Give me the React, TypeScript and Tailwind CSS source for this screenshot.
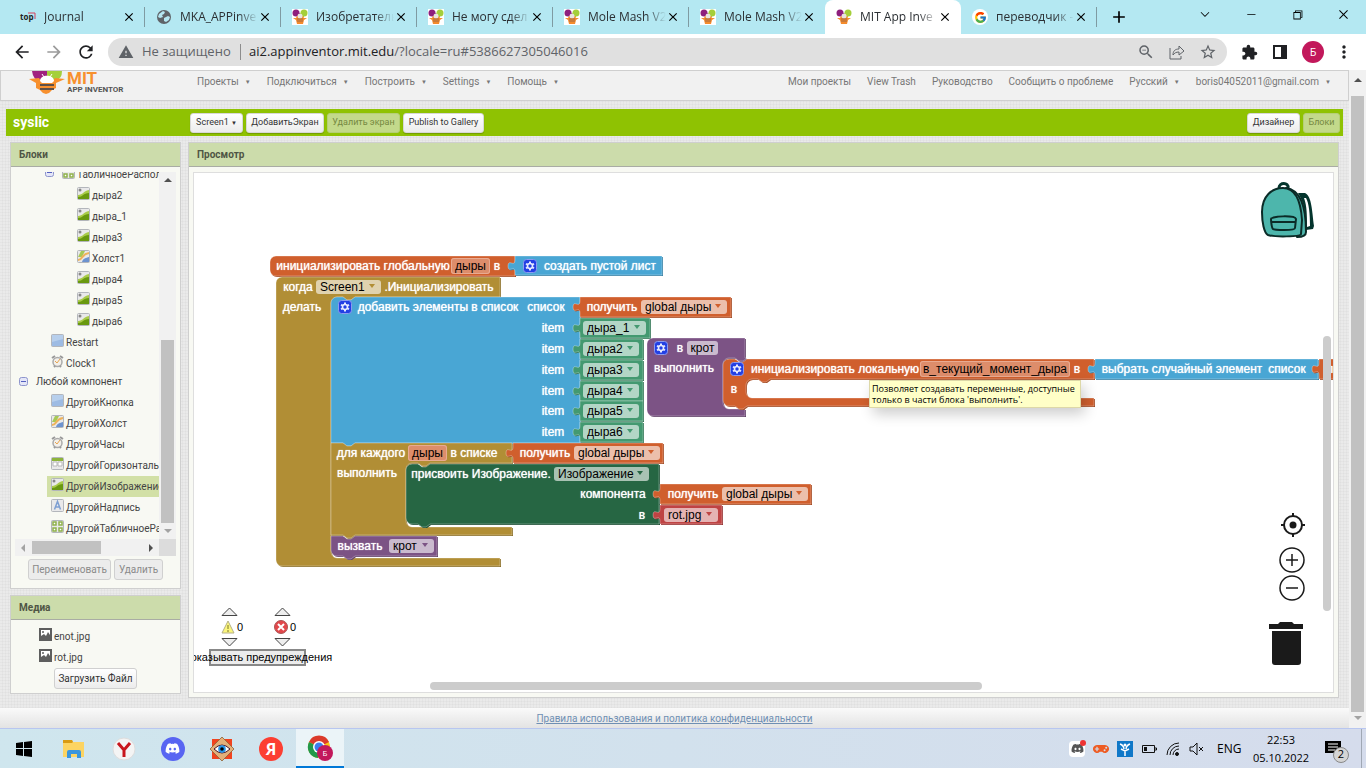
import type { ReactNode } from "react";
import {
  MdArrowBack, MdArrowForward, MdRefresh, MdWarning, MdStarBorder, MdExtension, MdMoreVert,
  MdAdd, MdClose, MdOutlineZoomOut,
} from "react-icons/md";
import { FaDiscord, FaGamepad } from "react-icons/fa";
import { FcGoogle } from "react-icons/fc";
import { VscChromeClose, VscChromeMinimize, VscChromeRestore, VscChevronDown } from "react-icons/vsc";

/* ---------- browser chrome ---------- */

function BeeIcon() {
  return (
    <svg viewBox="0 0 16 16" className="size-4 shrink-0">
      <rect width="16" height="16" fill="#fff" />
      <circle cx="4" cy="4" r="3.500" fill="#8e1f7d" />
      <path d="M4 4h4v4H5z" fill="#8e1f7d" />
      <circle cx="12" cy="4" r="3.500" fill="#a4cf3a" />
      <path d="M8 4h4v4H8z" fill="#a4cf3a" />
      <path d="M1 9h3l1-2h6l1 2h3l-3 2-1 4H5l-1-4z" fill="#f58b2c" />
      <circle cx="8" cy="7" r="2.500" fill="#e9e4e0" />
      <path d="M5 10h6M5 12h6" stroke="#a06a45" />
    </svg>
  );
}

function GlobeIcon() {
  return (
    <svg viewBox="0 0 16 16" className="size-4 shrink-0">
      <circle cx="8" cy="8" r="7" fill="#5f6368" />
      <path d="M3 5l4-3 2 1-1 2-2 1 1 2-3 1-2-1zM8 9l4-2 2 1-1 3-3 2-2-1z" fill="#b5e7f2" />
    </svg>
  );
}

function TopIcon() {
  return (
    <span className="relative w-4 shrink-0 text-[8px] font-bold leading-4 text-[#222]">
      top
      <svg viewBox="0 0 16 16" className="absolute inset-0 size-4">
        <path d="M8 4h7v6" fill="none" stroke="#d8405c" />
      </svg>
    </span>
  );
}

type Tab = { title: string; icon: ReactNode; active?: boolean };

const TABS: Tab[] = [
  { title: "Journal", icon: <TopIcon /> },
  { title: "MKA_APPinve", icon: <GlobeIcon /> },
  { title: "Изобретатель", icon: <BeeIcon /> },
  { title: "Не могу сдел", icon: <BeeIcon /> },
  { title: "Mole Mash V2", icon: <BeeIcon /> },
  { title: "Mole Mash V2", icon: <BeeIcon /> },
  { title: "MIT App Inve", icon: <BeeIcon />, active: true },
  {
    title: "переводчик -",
    icon: <span className="flex size-4 shrink-0 items-center justify-center rounded-full bg-white"><FcGoogle size={13} /></span>,
  },
];

function TabStrip() {
  return (
    <div className="flex h-[34px] shrink-0 bg-[#b4e8f2] pl-[9px] font-['Open_Sans',sans-serif]">
      {TABS.map((tab, i) => (
        <div
          key={i}
          className={
            tab.active
              ? "flex w-[136px] items-center rounded-t-lg bg-white pl-[11px]"
              : "flex w-[136px] items-center pl-[11px]"
          }
        >
          {tab.icon}
          <span className="ml-2 min-w-0 flex-1 overflow-hidden whitespace-nowrap text-[12px] leading-4 text-[#2b2f33] [mask-image:linear-gradient(90deg,#000_75%,transparent)]">
            {tab.title}
          </span>
          <button aria-label="Закрыть вкладку" className="shrink-0 text-black"><MdClose size={14} /></button>
          <span className={tab.active || i === 5 ? "ml-2 h-5 w-px" : "ml-2 h-5 w-px bg-[#7f9ba2]"} />
        </div>
      ))}
      <button aria-label="Новая вкладка" className="ml-3 text-black"><MdAdd size={20} /></button>
      <div className="ml-auto flex h-7 text-black">
        <button aria-label="Поиск вкладок" className="flex w-[46px] items-center justify-center"><VscChevronDown size={14} /></button>
        <button aria-label="Свернуть" className="flex w-[46px] items-center justify-center"><VscChromeMinimize size={12} /></button>
        <button aria-label="Развернуть" className="flex w-[46px] items-center justify-center"><VscChromeRestore size={13} /></button>
        <button aria-label="Закрыть" className="flex w-[46px] items-center justify-center"><VscChromeClose size={13} /></button>
      </div>
    </div>
  );
}

function AddressBar() {
  return (
    <div className="flex h-9 shrink-0 items-center bg-white pl-3 pr-4 font-['Open_Sans',sans-serif] text-[#202124]">
      <button aria-label="Назад" className="mr-3"><MdArrowBack size={20} /></button>
      <button aria-label="Вперёд" className="mr-3 text-[#9b9b9b]"><MdArrowForward size={20} /></button>
      <button aria-label="Обновить" className="mr-3"><MdRefresh size={20} /></button>
      <div className="flex h-7 flex-1 items-center rounded-full bg-[#e0e0e0] pl-2.5 pr-2.5 text-[13px] text-[#5f6368]">
        <MdWarning size={16} />
        <span className="ml-2 w-[90px] whitespace-nowrap">Не защищено</span>
        <span className="mx-2 h-4 w-px bg-[#8d8d8d]" />
        <span className="whitespace-nowrap">
          <span className="text-[#202124]">ai2.appinventor.mit.edu</span>/?locale=ru#5386627305046016
        </span>
        <div className="ml-auto flex items-center gap-3.5">
          <MdOutlineZoomOut size={18} />
          <svg viewBox="0 0 16 16" className="size-4" fill="none" stroke="currentColor">
            <path d="M1 4v11h11v-3M4 11c0-4 2-6 6-6V2l5 5-5 4V8C7 8 5.500 9 4 11z" />
          </svg>
          <MdStarBorder size={18} />
        </div>
      </div>
      <div className="ml-3.5 flex items-center gap-3.5">
        <MdExtension size={17} />
        <svg viewBox="0 0 16 16" className="size-4"><path d="M1 1h14v14H1zM3 3v10h6V3z" fillRule="evenodd" fill="#202124" /></svg>
        <span className="flex size-[22px] items-center justify-center rounded-full bg-[#c2185b] text-[11px] text-white">Б</span>
        <button aria-label="Меню" className="-mx-1"><MdMoreVert size={20} /></button>
      </div>
    </div>
  );
}

/* ---------- App Inventor header ---------- */

function Logo() {
  return (
    <div className="flex w-[164px] items-start pl-[28px]">
      <svg viewBox="0 0 36 26" className="h-[26px] w-9 shrink-0">
        <path d="M3 0h15v9l-8 1Q4 8 3 0z" fill="#a0217f" />
        <path d="M18 0h15q0 8-6 9l-9 1z" fill="#a4d03c" />
        <path d="M0 8l10-1 2 3h12l2-3 10 1-9 4 0 5-4 2-3 3-3 1-3-1-3-3-4-2V12z" fill="#f7902e" />
        <path d="M11 10c0-7 14-7 14 0l-2 2H13z" fill="#fff" />
        <path d="M15 6l-2-3M21 6l2-3" stroke="#fff" />
        <path d="M11 14h14M11 18h14" stroke="#5f5048" strokeWidth="2" />
      </svg>
      <div className="ml-0.5 font-bold">
        <div className="text-[17px] leading-[14px] text-[#f7902e]">MIT</div>
        <div className="whitespace-nowrap text-[8px] leading-[10px] text-[#555]">APP INVENTOR</div>
      </div>
    </div>
  );
}

function NavLink({ label, menu }: { label: string; menu?: boolean }) {
  return (
    <a href="#" className="flex items-center whitespace-nowrap">
      {label}
      {menu && <span className="ml-1.5 text-[6px]">▼</span>}
    </a>
  );
}

function SiteHeader() {
  return (
    <header className="flex h-[31px] shrink-0 items-start border border-[#cfcfcf] bg-[#f1f1f1] text-[10px] text-[#777]">
      <Logo />
      <nav className="ml-8 mt-0.5 flex h-4 items-center gap-4">
        <NavLink label="Проекты" menu />
        <NavLink label="Подключиться" menu />
        <NavLink label="Построить" menu />
        <NavLink label="Settings" menu />
        <NavLink label="Помощь" menu />
      </nav>
      <nav className="ml-auto mr-[17px] mt-0.5 flex h-4 items-center gap-4">
        <NavLink label="Мои проекты" />
        <NavLink label="View Trash" />
        <NavLink label="Руководство" />
        <NavLink label="Сообщить о проблеме" />
        <NavLink label="Русский" menu />
        <NavLink label="boris04052011@gmail.com" menu />
      </nav>
    </header>
  );
}

const BTN = "h-5 whitespace-nowrap rounded-[3px] border border-[#d8d8d8] bg-linear-to-b from-white to-[#ececec] text-[9px] text-[#333] shadow-[0_1px_1px_#0003]";
const BTN_OFF = "h-5 whitespace-nowrap rounded-[3px] border border-[#b5cf77] bg-[#c3d98b] text-[9px] text-[#75883f]";

function ProjectBar() {
  return (
    <div className="mx-1.5 mt-2 flex h-[27px] shrink-0 items-center gap-[3px] bg-[#8fc202] pl-[7px] pr-[3px]">
      <h1 className="w-[174px] text-[14px] font-bold text-white">syslic</h1>
      <button className={`${BTN} w-[53px]`}>Screen1 <span className="align-middle text-[6px]">▼</span></button>
      <button className={`${BTN} w-[78px]`}>ДобавитьЭкран</button>
      <button className={`${BTN_OFF} w-[73px]`} disabled>Удалить экран</button>
      <button className={`${BTN} w-[81px]`}>Publish to Gallery</button>
      <button className={`${BTN} ml-auto w-[53px]`}>Дизайнер</button>
      <button className={`${BTN_OFF} w-[37px]`} disabled>Блоки</button>
    </div>
  );
}

/* ---------- left column ---------- */

type IconKind = "image" | "canvas" | "button" | "clock" | "horizontal" | "label" | "table";

function ComponentIcon({ kind }: { kind: IconKind }) {
  return (
    <svg viewBox="0 0 13 13" className="size-[13px] shrink-0">
      {kind !== "clock" && (
        <rect x=".5" y=".5" width="12" height="12" rx="1" fill={kind === "button" ? "#9dbbe3" : "#e9e9ea"} stroke="#b3b6bb" />
      )}
      {kind === "image" && (
        <>
          <path d="M1 9c5 0 5-4 11-5v8H1z" fill="#69990f" />
          <path d="M1 8c5 0 5-4 11-5v3c-6 0-6 4-11 4z" fill="#a9cb4a" />
          <circle cx="3" cy="3" r="1.500" fill="#888" />
        </>
      )}
      {kind === "button" && <path d="M1 1h11v4L1 8z" fill="#b7cfec" />}
      {kind === "canvas" && (
        <>
          <path d="M4 1h4L5 7H1z" fill="#a6c957" />
          <path d="M1 10c5 0 3-6 11-7" fill="none" stroke="#eeb35b" strokeWidth="2" />
          <path d="M5 12c1-4 4-4 7-5v5z" fill="#6d93cf" />
        </>
      )}
      {kind === "clock" && (
        <>
          <circle cx="6.500" cy="7" r="4.500" fill="#f3f0ea" stroke="#aaa" strokeWidth="1.500" />
          <path d="M1 3l3-2M12 3L9 1M3 12l1-1M10 12l-1-1" stroke="#999" strokeWidth="2" />
          <path d="M4 6l2 2 3-4" fill="none" stroke="#e8a54e" />
        </>
      )}
      {kind === "horizontal" && (
        <>
          <path d="M1 1h11v3H1z" fill="#8db43b" />
          <path d="M2 5h4v4H2zM7 5h4v4H7z" fill="#fff" stroke="#b8b8b8" />
        </>
      )}
      {kind === "table" && (
        <path d="M2 2h3v3H2zM8 2h3v3H8zM2 8h3v3H2zM8 8h3v3H8z" fill="#fff" stroke="#8fb14b" strokeWidth="1.500" />
      )}
      {kind === "label" && <path d="M3.500 10.500l3-8 3 8M4.500 8h4" fill="none" stroke="#7d9fd2" strokeWidth="1.500" />}
    </svg>
  );
}

const SCREEN_ITEMS: { label: string; kind: IconKind }[] = [
  { label: "дыра2", kind: "image" },
  { label: "дыра_1", kind: "image" },
  { label: "дыра3", kind: "image" },
  { label: "Холст1", kind: "canvas" },
  { label: "дыра4", kind: "image" },
  { label: "дыра5", kind: "image" },
  { label: "дыра6", kind: "image" },
];

const ANY_ITEMS: { label: string; kind: IconKind; selected?: boolean }[] = [
  { label: "ДругойКнопка", kind: "button" },
  { label: "ДругойХолст", kind: "canvas" },
  { label: "ДругойЧасы", kind: "clock" },
  { label: "ДругойГоризонталь", kind: "horizontal" },
  { label: "ДругойИзображение", kind: "image", selected: true },
  { label: "ДругойНадпись", kind: "label" },
  { label: "ДругойТабличноеРа", kind: "table" },
];

function TreeRow({ label, kind, deep, selected }: { label: string; kind: IconKind; deep?: boolean; selected?: boolean }) {
  return (
    <li
      className={`flex h-[21px] shrink-0 items-center gap-0.5 whitespace-nowrap pl-1 ${deep ? "ml-[58px]" : "ml-8"} ${selected ? "bg-[#d2e0a6]" : ""}`}
    >
      <span className="pb-1"><ComponentIcon kind={kind} /></span>
      {label}
    </li>
  );
}

function Collapse() {
  return (
    <svg viewBox="0 0 9 9" className="size-[9px] shrink-0">
      <rect x=".5" y=".5" width="8" height="8" rx="2" fill="#e4e6f7" stroke="#8e95cc" />
      <path d="M2 4.500h5" stroke="#5560c0" />
    </svg>
  );
}

function PanelTitle({ children }: { children: ReactNode }) {
  return <h2 className="h-6 shrink-0 border-b border-[#a9aca4] bg-[#ccdcab] pl-2 text-[10px] font-bold leading-6 text-[#4f5545]">{children}</h2>;
}

const SIDE_BTN_OFF = "h-[21px] rounded-[3px] border border-[#d0d0d0] bg-[#ececec] text-[10px] text-[#8a8a8a]";

function BlocksPanel() {
  return (
    <section className="flex h-[447px] shrink-0 flex-col border border-[#cfcfcf] bg-[#f8f9f3]">
      <PanelTitle>Блоки</PanelTitle>
      <div className="ml-1 mr-1 mt-[5px] flex h-[367px]">
        <ul className="flex min-w-0 flex-1 flex-col justify-end overflow-hidden text-[10px] text-[#444]">
          <li className="ml-[30px] flex h-[21px] shrink-0 items-center gap-0.5 whitespace-nowrap">
            <span className="mr-1.5 pb-1"><Collapse /></span>
            <span className="pb-1"><ComponentIcon kind="table" /></span>
            ТабличноеРаспол
          </li>
          {SCREEN_ITEMS.map((it) => <TreeRow key={it.label} deep {...it} />)}
          <TreeRow label="Restart" kind="button" />
          <TreeRow label="Clock1" kind="clock" />
          <li className="flex h-[18px] shrink-0 items-start gap-2 pl-1"><span className="pt-[3px]"><Collapse /></span>Любой компонент</li>
          {ANY_ITEMS.map((it) => <TreeRow key={it.label} {...it} />)}
        </ul>
        <div className="flex w-[17px] flex-col items-center justify-between bg-[#f1f1f1] py-1.5">
          <svg viewBox="0 0 8 4" className="h-1 w-2"><path d="M0 4l4-4 4 4z" fill="#505050" /></svg>
          <div className="mt-auto mb-1.5 h-[183px] w-[13px] bg-[#c1c1c1]" />
          <svg viewBox="0 0 8 4" className="h-1 w-2"><path d="M0 0l4 4 4-4z" fill="#a3a3a3" /></svg>
        </div>
      </div>
      <div className="mx-1 flex h-[17px] items-center bg-[#f1f1f1]">
        <svg viewBox="0 0 4 8" className="ml-1.5 h-2 w-1"><path d="M4 0L0 4l4 4z" fill="#a3a3a3" /></svg>
        <div className="ml-[7px] h-[13px] w-[69px] bg-[#c1c1c1]" />
        <svg viewBox="0 0 4 8" className="ml-auto mr-1.5 h-2 w-1"><path d="M0 0l4 4-4 4z" fill="#505050" /></svg>
        <div className="h-[17px] w-[17px] bg-[#dcdcdc]" />
      </div>
      <div className="mt-[3px] flex gap-[3px] pl-[17px]">
        <button disabled className={`${SIDE_BTN_OFF} w-[83px]`}>Переименовать</button>
        <button disabled className={`${SIDE_BTN_OFF} w-[49px]`}>Удалить</button>
      </div>
    </section>
  );
}

function MediaPanel() {
  return (
    <section className="h-[99px] shrink-0 border border-[#cfcfcf] bg-[#f8f9f3]">
      <PanelTitle>Медиа</PanelTitle>
      <ul className="pl-7 pt-1.5 text-[10px] text-[#444]">
        {["enot.jpg", "rot.jpg"].map((name) => (
          <li key={name} className="flex h-[21px] items-center gap-0.5">
            <svg viewBox="0 0 13 13" className="mb-1 size-[13px]">
              <rect x="1" y="1" width="11" height="11" fill="#fff" stroke="#5e5e5e" strokeWidth="2" />
              <path d="M2 11V8l3-2 2 2 2-4 2 3v4z" fill="#5e5e5e" />
              <circle cx="4" cy="4" r="1" fill="#5e5e5e" />
            </svg>
            {name}
          </li>
        ))}
      </ul>
      <button className="ml-[43px] block h-[21px] w-[83px] whitespace-nowrap rounded-[3px] border border-[#d0d0d0] bg-linear-to-b from-white to-[#ececec] text-[10px] text-[#333]">
        Загрузить Файл
      </button>
    </section>
  );
}

/* ---------- block shapes ---------- */

const C = {
  orange: "#d05f2d",
  blue: "#49a6d4",
  gold: "#b18e35",
  green: "#439970",
  dark: "#266643",
  red: "#bf4343",
  purple: "#7c5385",
};

// Output block: plain rectangle with the puzzle tab on its left side.
function valuePath(w: number, h: number) {
  return `M0 0H${w}V${h}H0V16c0-8-7 2-7-6s7 2 7-6z`;
}

type Edge = { top?: "round" | "hat" | "square"; bottom?: "round" | "square"; plug?: boolean };

function topEdge({ top = "round" }: Edge) {
  if (top === "hat") return "M0 6a6 6 0 0 1 6-6";
  return top === "round" ? "M0 6a6 6 0 0 1 6-6h6l4 3h4l4-3" : "M0 0h12l4 3h4l4-3";
}

function bottomEdge({ bottom = "round", plug = true }: Edge) {
  const nub = plug ? "H24l-4 3h-4l-4-3" : "";
  return bottom === "round" ? `${nub}H6a6 6 0 0 1-6-6z` : `${nub}H0z`;
}

function stackPath(w: number, h: number, edge: Edge) {
  return `${topEdge(edge)}H${w}V${h}${bottomEdge(edge)}`;
}

// C-shaped block: header, left arm, opening from y=20 to y=inner, footer.
function wrapPath(w: number, arm: number, inner: number, h: number, edge: Edge) {
  const a = arm;
  return `${topEdge(edge)}H${w}V20H${a + 24}l-4 3h-4l-4-3H${a + 6}a6 6 0 0 0-6 6V${inner - 6}a6 6 0 0 0 6 6H${w}V${h}${bottomEdge(edge)}`;
}

const BLOCKS: { x: number; y: number; color: string; d: string }[] = [
  { x: 76, y: 83, color: C.orange, d: "M0 6a6 6 0 0 1 6-6H245V20H6a6 6 0 0 1-6-6z" },
  { x: 321, y: 83, color: C.blue, d: valuePath(147, 19) },
  { x: 82, y: 104, color: C.gold, d: wrapPath(224, 55, 281, 289, { top: "hat", plug: false }) },
  { x: 137, y: 124, color: C.blue, d: stackPath(249, 146, { bottom: "square" }) },
  { x: 386, y: 124, color: C.orange, d: valuePath(151, 20) },
  { x: 386, y: 145, color: C.green, d: valuePath(70, 20) },
  { x: 386, y: 166, color: C.green, d: valuePath(63, 20) },
  { x: 386, y: 187, color: C.green, d: valuePath(63, 20) },
  { x: 386, y: 208, color: C.green, d: valuePath(63, 20) },
  { x: 386, y: 228, color: C.green, d: valuePath(63, 20) },
  { x: 386, y: 249, color: C.green, d: valuePath(63, 20) },
  { x: 137, y: 270, color: C.gold, d: wrapPath(181, 75, 84, 92, { top: "square", bottom: "square" }) },
  { x: 319, y: 270, color: C.orange, d: valuePath(150, 20) },
  { x: 212, y: 291, color: C.dark, d: stackPath(253, 60, {}) },
  { x: 466, y: 311, color: C.orange, d: valuePath(151, 20) },
  { x: 466, y: 332, color: C.red, d: valuePath(62, 19) },
  { x: 137, y: 363, color: C.purple, d: stackPath(106, 20, { top: "square" }) },
  { x: 453, y: 165, color: C.purple, d: wrapPath(98, 76, 71, 78, { top: "hat", plug: false }) },
  { x: 529, y: 186, color: C.orange, d: wrapPath(371, 23, 39, 47, {}) },
  { x: 901, y: 186, color: C.blue, d: valuePath(223, 20) },
  { x: 1125, y: 186, color: C.orange, d: valuePath(151, 20) },
];

// x is the middle of the label, y the middle of its row.
const LABELS: [number, number, string][] = [
  [169, 93, "инициализировать глобальную"], [303, 93, "в"], [406, 93, "создать пустой лист"],
  [104, 114, "когда"], [245, 114, ".Инициализировать"],
  [108, 134, "делать"], [244, 134, "добавить элементы в список"], [352, 134, "список"], [418, 134, "получить"],
  [359, 155, "item"], [359, 176, "item"], [359, 197, "item"], [359, 218, "item"], [359, 238, "item"], [359, 259, "item"],
  [177, 280, "для каждого"], [280, 280, "в списке"], [351, 280, "получить"],
  [173, 300, "выполнить"], [287, 301, "присвоить Изображение."],
  [419, 321, "компонента"], [499, 321, "получить"], [448, 342, "в"],
  [166, 373, "вызвать"],
  [486, 175, "в"], [490, 195, "выполнить"],
  [641, 196, "инициализировать локальную"], [883, 196, "в"], [540, 216, "в"],
  [988, 196, "выбрать случайный элемент"], [1093, 196, "список"], [1158, 196, "получить"],
];

const SELECTS: [number, number, number, string, string][] = [
  [122, 114, 65, "Screen1", C.gold],
  [447, 134, 86, "global дыры", C.orange],
  [389, 155, 63, "дыра_1", C.green],
  [389, 176, 56, "дыра2", C.green],
  [389, 197, 56, "дыра3", C.green],
  [389, 218, 56, "дыра4", C.green],
  [389, 238, 56, "дыра5", C.green],
  [389, 259, 56, "дыра6", C.green],
  [380, 280, 86, "global дыры", C.orange],
  [360, 301, 95, "Изображение", C.dark],
  [528, 321, 86, "global дыры", C.orange],
  [470, 342, 54, "rot.jpg", C.red],
  [195, 373, 45, "крот", C.purple],
];

const INPUTS: [number, number, number, string, boolean?][] = [
  [257, 93, 39, "дыры"],
  [214, 280, 39, "дыры"],
  [493, 175, 31, "крот", true],
  [726, 196, 150, "в_текущий_момент_дыра"],
];

const GEARS: [number, number][] = [[336, 93], [151, 134], [467, 175], [543, 196]];

function BlockCanvas() {
  return (
    <div className="absolute inset-0 font-['Liberation_Sans',Arial,sans-serif] text-[12px] leading-[14px]">
      <svg className="absolute inset-0 h-full w-full">
        {BLOCKS.map((b, i) => (
          <g key={i} transform={`translate(${b.x} ${b.y})`}>
            <path d={b.d} fill={b.color} transform="translate(1 1)" />
            <path d={b.d} fill="#0003" transform="translate(1 1)" />
            <path d={b.d} fill={b.color} />
            <path d={b.d} fill="none" stroke="#ffffff4d" />
          </g>
        ))}
      </svg>
      {LABELS.map(([x, y, text], i) => (
        <span
          key={i}
          className="absolute -translate-x-1/2 -translate-y-1/2 whitespace-nowrap text-white [text-shadow:0_0_1px_#fff]"
          style={{ left: x, top: y }}
        >
          {text}
        </span>
      ))}
      {SELECTS.map(([x, y, w, text, color], i) => (
        <div key={i} className="absolute h-[14px] -translate-y-1/2" style={{ left: x, top: y, width: w }}>
          <select
            aria-label={text}
            className="block h-[14px] w-full appearance-none rounded-[3px] bg-white/60 pl-1 leading-[14px] text-black"
          >
            <option>{text}</option>
          </select>
          <svg viewBox="0 0 6 4" className="pointer-events-none absolute right-1.5 top-1 h-1 w-1.5">
            <path d="M0 0h6L3 4z" fill={color} />
          </svg>
        </div>
      ))}
      {INPUTS.map(([x, y, w, text, pale], i) => (
        <input
          key={i}
          aria-label="Имя"
          defaultValue={text}
          className={
            pale
              ? "absolute h-[14px] -translate-y-1/2 rounded-[3px] bg-white/60 text-center leading-[14px] text-black"
              : "absolute h-4 -translate-y-1/2 rounded-[3px] bg-[#dd8d6b] text-center leading-4 text-black inset-ring-1 inset-ring-[#e8ab92]"
          }
          style={{ left: x, top: y, width: w }}
        />
      ))}
      {GEARS.map(([x, y], i) => (
        <button
          key={i}
          aria-label="Настроить блок"
          className="absolute size-[14px] -translate-x-1/2 -translate-y-1/2"
          style={{ left: x, top: y }}
        >
          <svg viewBox="0 0 14 14" className="size-[14px]">
            <rect x=".5" y=".5" width="13" height="13" rx="3" fill="#2340e4" stroke="#8b9bf0" />
            <path d="M7 2.500v9M3 4.750l8 4.500M3 9.250l8-4.500" stroke="#e6eaff" strokeWidth="2" />
            <circle cx="7" cy="7" r="3.300" fill="#e6eaff" />
            <circle cx="7" cy="7" r="1.700" fill="#2340e4" />
          </svg>
        </button>
      ))}
    </div>
  );
}

function Triangle({ down }: { down?: boolean }) {
  return (
    <svg viewBox="0 0 17 9" className="h-[9px] w-[17px]">
      <path d={down ? "M1 .5h15L8.500 8z" : "M1 8.500h15L8.500 1z"} fill="#eee" stroke="#444" />
    </svg>
  );
}

function Warnings() {
  return (
    <div className="absolute bottom-[26px] left-[15px] w-[97px] font-['Liberation_Sans',Arial,sans-serif] text-[11px] text-black">
      <div className="flex gap-[29px] pl-3">
        <div className="flex w-6 flex-col gap-1">
          <Triangle />
          <div className="flex h-[14px] items-center gap-0.5">
            <svg viewBox="0 0 14 14" className="size-[14px] shrink-0">
              <path d="M7 1l6 12H1z" fill="#fbf67c" stroke="#b5b08a" />
              <path d="M7 5v4M7 10v2" stroke="#7a7527" />
            </svg>
            0
          </div>
          <Triangle down />
        </div>
        <div className="flex w-6 flex-col gap-1">
          <Triangle />
          <div className="flex h-[14px] items-center gap-0.5">
            <svg viewBox="0 0 14 14" className="size-[14px] shrink-0">
              <circle cx="7" cy="7" r="6.500" fill="#e2474b" stroke="#a55" />
              <path d="M4 4l6 6M10 4l-6 6" stroke="#fff" strokeWidth="2" />
            </svg>
            0
          </div>
          <Triangle down />
        </div>
      </div>
      <button className="mt-0.5 flex h-[17px] w-full items-center justify-center whitespace-nowrap border-2 border-[#888] bg-[#ececec]">
        <span>Показывать предупреждения</span>
      </button>
    </div>
  );
}

function Backpack() {
  return (
    <svg viewBox="0 0 57 56" className="absolute right-[17px] top-[9px] h-14 w-[57px]" strokeLinecap="round" strokeLinejoin="round">
      <path d="M39 11h7c7 3 7 19 9 33l-1 3-7 1c0-17-2-27-8-37z" fill="#04352d" />
      <path d="M45 16c3 8 3 18 3 29l3-1c0-12-1-23-4-28z" fill="#fff" />
      <path d="M20 6c0-6 10-6 9 0" fill="none" stroke="#04352d" strokeWidth="3" />
      <path d="M27 6c16 2 20 22 20 44 0 4-5 5-9 5z" fill="#4db6ac" stroke="#0b2b27" strokeWidth="2" />
      <path d="M3 30C3 14 13 6 24 6c14 0 18 16 19 32l-1 14c0 3-28 3-33 1C5 51 3 40 3 30z" fill="#4db6ac" stroke="#0b2b27" strokeWidth="2" />
      <path d="M12 37c0-3 24-4 25 0l-1 9c0 3-21 2-22 1-1 0-2-7-2-10zM12 40h24" fill="none" stroke="#0b2b27" strokeWidth="2" />
    </svg>
  );
}

function CanvasControls() {
  return (
    <div className="absolute bottom-[27px] right-[30px] flex w-[34px] flex-col items-center">
      <button aria-label="К центру" className="ml-3.5">
        <svg viewBox="0 0 26 26" className="size-[26px]" fill="none" stroke="#1a1a1a" strokeWidth="2">
          <circle cx="13" cy="13" r="9" />
          <circle cx="13" cy="13" r="3.500" fill="#1a1a1a" stroke="none" />
          <path d="M13 1v4M13 21v4M1 13h4M21 13h4" />
        </svg>
      </button>
      <button aria-label="Увеличить" className="ml-3 mt-[9px]">
        <svg viewBox="0 0 26 26" className="size-[26px]" fill="none" stroke="#1a1a1a" strokeWidth="1.500">
          <circle cx="13" cy="13" r="12" /><path d="M7 13h12M13 7v12" />
        </svg>
      </button>
      <button aria-label="Уменьшить" className="ml-3 mt-0.5">
        <svg viewBox="0 0 26 26" className="size-[26px]" fill="none" stroke="#1a1a1a" strokeWidth="1.500">
          <circle cx="13" cy="13" r="12" /><path d="M7 13h12" />
        </svg>
      </button>
      <svg viewBox="0 0 34 43" className="mt-[21px] h-[43px] w-[34px]" fill="#1a1a1a">
        <path d="M0 2h9l2-2h12l2 2h9v5H0zM3 9h29v31q0 3-3 3H6q-3 0-3-3z" />
      </svg>
    </div>
  );
}

function Viewer() {
  return (
    <section className="mb-2.5 flex min-w-0 flex-1 flex-col border border-[#cfcfcf] bg-[#f8f9f3]">
      <PanelTitle>Просмотр</PanelTitle>
      <div className="relative m-1 mt-[5px] flex-1 overflow-hidden border border-[#dedede] bg-white">
        <BlockCanvas />
        <Backpack />
        <Warnings />
        <CanvasControls />
        <div className="absolute right-0.5 top-[163px] h-[275px] w-2 rounded-full bg-[#ccc]" />
        <div className="absolute bottom-0.5 left-[236px] h-2 w-[552px] rounded-full bg-[#ccc]" />
        <div
          role="tooltip"
          className="absolute left-[675px] top-[207px] w-[212px] whitespace-nowrap border border-[#ddd8a8] bg-[#ffffc7] px-0.5 py-0.5 font-['Open_Sans',sans-serif] text-[9px] leading-[11px] text-black shadow-[4px_6px_14px_#0003]"
        >
          Позволяет создавать переменные, доступные
          <br />
          только в части блока 'выполнить'.
        </div>
      </div>
    </section>
  );
}

/* ---------- taskbar ---------- */

function Taskbar() {
  return (
    <footer className="flex h-10 shrink-0 items-stretch border-t border-[#b8c6f0] bg-linear-to-r from-[#cfe6ee] to-[#d5dcec] font-['Open_Sans',sans-serif] text-black">
      <button aria-label="Пуск" className="flex w-12 items-center justify-center">
        <svg viewBox="0 0 16 16" className="size-4"><path d="M0 2l7-1v6H0zM8 1l8-1v7H8zM0 8h7v7l-7-1zM8 8h8v8l-8-1z" /></svg>
      </button>
      <button aria-label="Проводник" className="flex w-[52px] items-center justify-center">
        <svg viewBox="0 0 22 18" className="h-[18px] w-[22px]">
          <path d="M0 0h9l1 2h11v15H0z" fill="#fcd462" />
          <path d="M0 0h9l1 2-1 1H0z" fill="#d99b14" />
          <path d="M4 18v-6q0-2 2-2h10q2 0 2 2v6h-4v-4H8v4z" fill="#3a96dd" />
        </svg>
      </button>
      <button aria-label="Яндекс Браузер" className="flex w-12 items-center justify-center">
        <svg viewBox="0 0 24 24" className="size-6">
          <circle cx="12" cy="12" r="11" fill="#f4f4f4" stroke="#ddd" />
          <path d="M6 6l6 7 6-7M12 12v8" fill="none" stroke="#c8161d" strokeWidth="3" />
        </svg>
      </button>
      <button aria-label="Discord" className="flex w-[49px] items-center justify-center">
        <span className="flex size-6 items-center justify-center rounded-full bg-[#5865f2] text-white"><FaDiscord size={15} /></span>
      </button>
      <button aria-label="FastStone" className="flex w-[49px] items-center justify-center">
        <svg viewBox="0 0 24 24" className="size-6">
          <rect x="2" y="2" width="20" height="20" fill="#f0441f" />
          <path d="M12 0l12 12-12 12L0 12z" fill="#e3b07a" stroke="#8b6236" strokeWidth=".8" />
          <path d="M4 12q8-8 16 0-8 8-16 0z" fill="#fff" stroke="#412" />
          <circle cx="12" cy="12" r="3.800" fill="#2694e8" /><circle cx="12" cy="12" r="1.800" />
        </svg>
      </button>
      <button aria-label="Яндекс" className="flex w-[50px] items-center justify-center">
        <span className="flex size-6 items-center justify-center rounded-full bg-[#fc3f32] text-[16px] font-bold text-white">Я</span>
      </button>
      <button aria-label="Google Chrome" className="flex w-12 items-center justify-center border-b-2 border-[#0078d7] bg-[#ebf4f8]">
        <svg viewBox="0 0 26 26" className="size-[26px]">
          <circle cx="12" cy="12" r="11" fill="#fbc116" />
          <path d="M12 12L2 7a11 11 0 0 1 20 0z" fill="#db3a2c" />
          <path d="M12 12L2 7a11 11 0 0 0 9 16z" fill="#23984a" />
          <circle cx="12" cy="12" r="6" fill="#fff" /><circle cx="12" cy="12" r="4.500" fill="#3c7ded" />
          <circle cx="18" cy="18" r="8" fill="#c2185b" />
          <text x="18" y="21" textAnchor="middle" fontSize="8" fill="#fff">Б</text>
        </svg>
      </button>
      <div className="ml-auto flex items-center gap-2">
        <span className="relative flex size-4 items-center justify-center rounded bg-white text-[#555]">
          <FaDiscord size={13} />
          <span className="absolute -right-px -top-px size-1.5 rounded-full bg-[#e33]" />
        </span>
        <FaGamepad size={16} className="text-[#ee5b22]" />
        <svg viewBox="0 0 16 16" className="size-4">
          <rect width="16" height="16" fill="#1078c8" />
          <path d="M8 15V9M4 8l4 2 4-2M3 3a6 6 0 0 1 4 5M13 3a6 6 0 0 0-4 5" stroke="#fff" strokeWidth="1.500" fill="none" />
          <circle cx="8" cy="4" r="1.500" fill="#fff" />
        </svg>
        <svg viewBox="0 0 16 16" className="size-4" fill="none" stroke="#111"><path d="M1.500 4.500h12v7h-12zM14 7h1.500v2H14" /><path d="M3 6h3v4H3z" fill="#111" stroke="none" /></svg>
        <svg viewBox="0 0 16 16" className="size-4" fill="none" stroke="#111"><path d="M2 14A12 12 0 0 1 14 2M5 14a9 9 0 0 1 9-9M8 14a6 6 0 0 1 6-6" /><circle cx="12" cy="13" r="1.500" fill="#111" /></svg>
        <svg viewBox="0 0 16 16" className="size-4" fill="none" stroke="#111"><path d="M1 6h3l4-4v12l-4-4H1zM10 6l4 4M14 6l-4 4" /></svg>
        <span className="ml-1 w-6 text-[12px]">ENG</span>
        <div className="w-[64px] text-center text-[11px] leading-[18px]">
          <div>22:53</div>
          <div>05.10.2022</div>
        </div>
        <div className="relative ml-1 h-4 w-7">
          <svg viewBox="0 0 16 16" className="size-4"><path d="M0 0h16v12h-4l-3 3v-3H0z" /><path d="M3 3h10M3 6h10M3 9h7" stroke="#fff" /></svg>
          <span className="absolute left-2 top-1.5 flex size-4 items-center justify-center rounded-full border border-[#888] bg-[#d5d5d5] text-[11px]">2</span>
        </div>
      </div>
      <div className="ml-2 w-[5px] border-l border-[#a0a8b4]" />
    </footer>
  );
}

export default function App() {
  return (
    <div className="flex h-screen flex-col overflow-hidden">
      <TabStrip />
      <AddressBar />
      <div className="flex min-h-0 flex-1">
        <div className="flex min-w-0 flex-1 flex-col bg-[#eaeaea] bg-[repeating-linear-gradient(0deg,transparent_0_2px,#00000006_2px_3px),repeating-linear-gradient(90deg,transparent_0_2px,#00000006_2px_3px)] font-[Roboto,sans-serif]">
          <SiteHeader />
          <ProjectBar />
          <main className="mt-1.5 flex min-h-0 flex-1 gap-[7px] pl-2.5 pr-2.5">
            <div className="flex w-[171px] shrink-0 flex-col gap-1.5">
              <BlocksPanel />
              <MediaPanel />
            </div>
            <Viewer />
          </main>
          <div className="flex h-5 shrink-0 items-center justify-center bg-linear-to-b from-[#fafafa] to-[#e3e3e3] text-[10px]">
            <a href="#" className="text-[#6f8fb3] underline">Правила использования и политика конфиденциальности</a>
          </div>
        </div>
        <div className="flex w-[17px] shrink-0 flex-col items-center bg-[#f1f1f1] py-2">
          <svg viewBox="0 0 8 4" className="h-1 w-2"><path d="M0 4l4-4 4 4z" fill="#505050" /></svg>
          <div className="mb-1 mt-3.5 w-[13px] flex-1 bg-[#c1c1c1]" />
          <svg viewBox="0 0 8 4" className="h-1 w-2"><path d="M0 0l4 4 4-4z" fill="#a3a3a3" /></svg>
        </div>
      </div>
      <Taskbar />
    </div>
  );
}
